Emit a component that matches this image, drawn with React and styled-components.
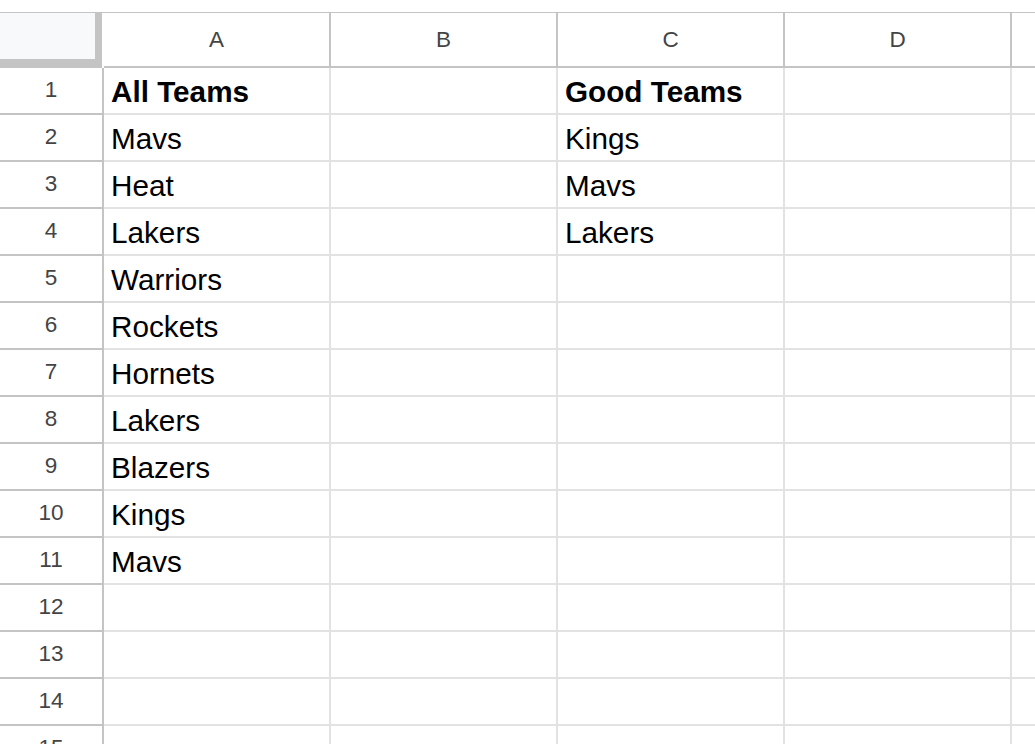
import React from 'react';
import styled, { createGlobalStyle } from 'styled-components';

const GlobalStyle = createGlobalStyle`
  html, body {
    margin: 0;
    padding: 0;
    background: #ffffff;
  }
  body {
    font-family: "Liberation Sans", Arial, sans-serif;
  }
`;

const Page = styled.div`
  width: 1035px;
  height: 744px;
  overflow: hidden;
  padding-top: 12px;
  box-sizing: border-box;
  background: #ffffff;
`;

const Sheet = styled.div`
  display: grid;
  grid-template-columns: 104px 227px 227px 227px 227px 120px;
  grid-auto-rows: 47px;
  grid-template-rows: 55px;
  border-top: 1px solid #c4c4c4;
  width: 1152px;
`;

const Corner = styled.div`
  box-sizing: border-box;
  background: #f8f9fa;
  border-right: 7px solid #c4c4c4;
  border-bottom: 9px solid #c4c4c4;
  width: 102px;
  margin-right: 2px;
`;

const ColHeader = styled.div`
  box-sizing: border-box;
  display: flex;
  align-items: center;
  justify-content: center;
  border-right: 2px solid #c4c4c4;
  border-bottom: 2px solid #c4c4c4;
  color: #444444;
  font-size: 22.5px;
  padding-top: 1px;
`;

const RowHeader = styled.div`
  box-sizing: border-box;
  display: flex;
  align-items: center;
  justify-content: center;
  border-right: 2px solid #c4c4c4;
  border-bottom: 2px solid #c4c4c4;
  color: #444444;
  font-size: 22.5px;
  padding-bottom: 1px;
`;

const Cell = styled.div`
  box-sizing: border-box;
  display: flex;
  align-items: flex-end;
  padding: 0 0 7px 7px;
  border-right: 2px solid #e2e2e2;
  border-bottom: 2px solid #e2e2e2;
  color: #000000;
  font-size: 29.7px;
  line-height: 29px;
  font-weight: ${(p) => (p.$bold ? 700 : 400)};
  white-space: nowrap;
  overflow: hidden;
`;

const columns = ['A', 'B', 'C', 'D', ''];

const allTeams = ['Mavs', 'Heat', 'Lakers', 'Warriors', 'Rockets', 'Hornets', 'Lakers', 'Blazers', 'Kings', 'Mavs'];
const goodTeams = ['Kings', 'Mavs', 'Lakers'];

const rows = Array.from({ length: 15 }, (_, i) => {
  if (i === 0) return ['All Teams', '', 'Good Teams', '', ''];
  return [allTeams[i - 1] || '', '', goodTeams[i - 1] || '', '', ''];
});

const App = () => (
  <Page>
    <GlobalStyle />
    <Sheet>
      <Corner />
      {columns.map((c, i) => (
        <ColHeader key={i}>{c}</ColHeader>
      ))}
      {rows.map((row, r) => (
        <React.Fragment key={r}>
          <RowHeader>{r + 1}</RowHeader>
          {row.map((val, c) => (
            <Cell key={c} $bold={r === 0}>
              {val}
            </Cell>
          ))}
        </React.Fragment>
      ))}
    </Sheet>
  </Page>
);

export default App;
